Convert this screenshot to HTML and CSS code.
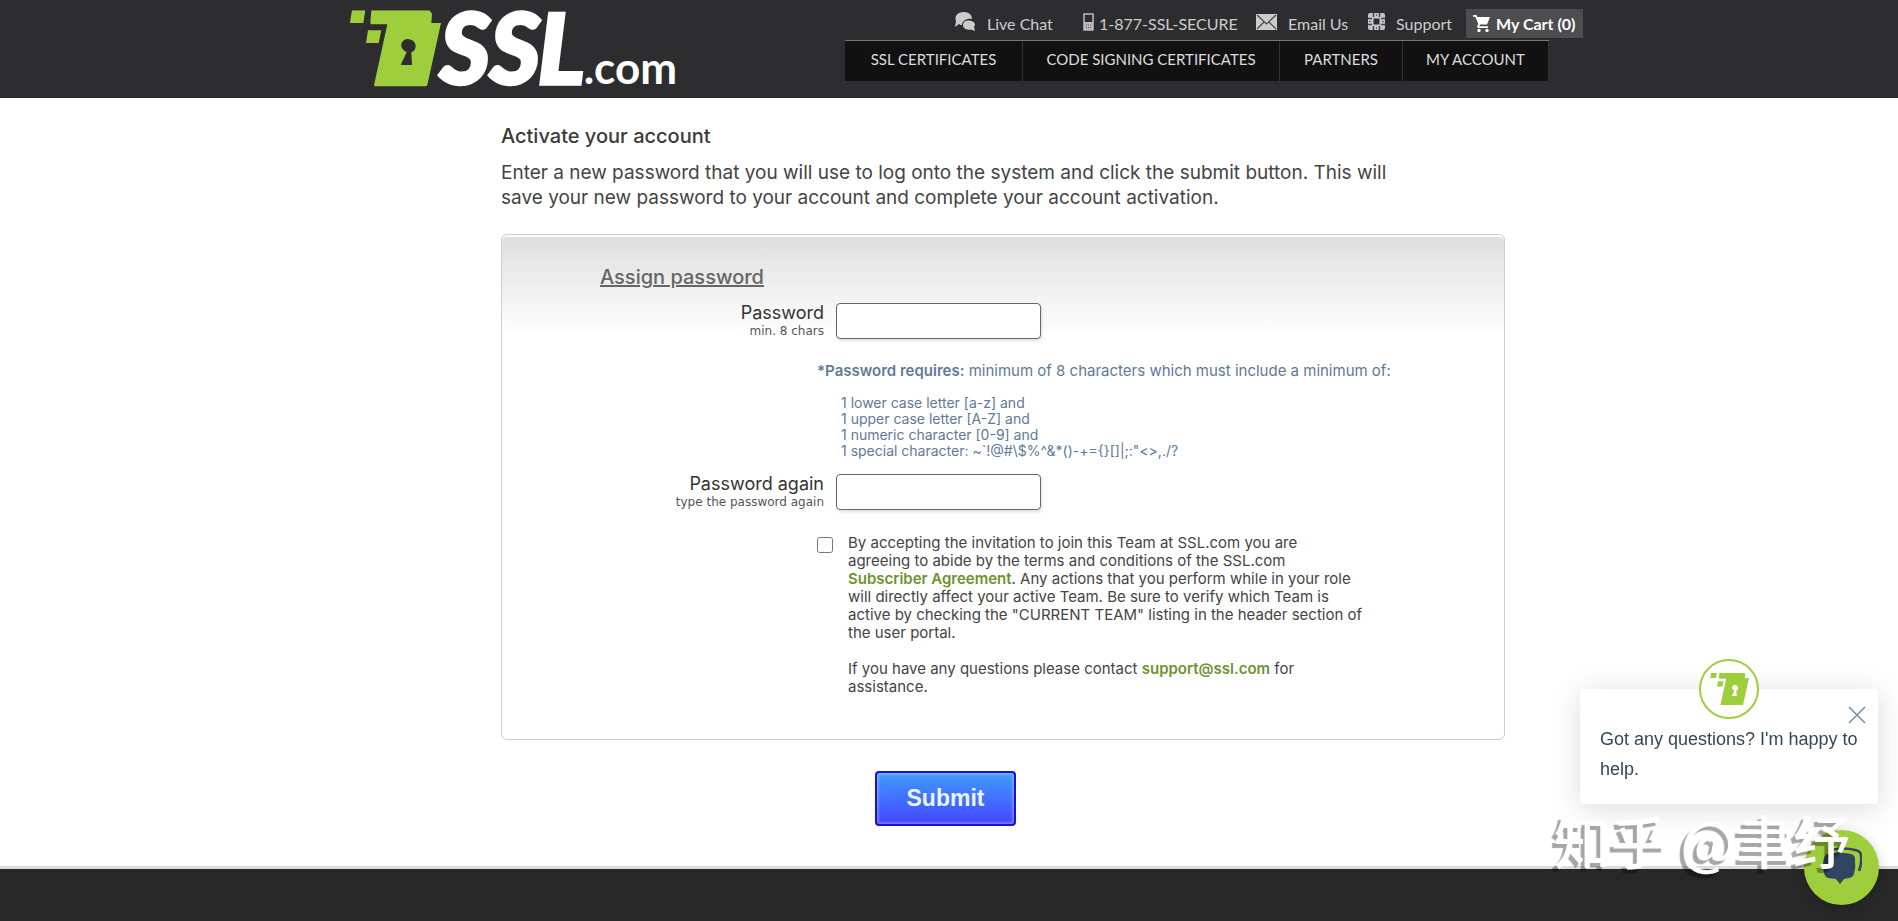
FILE: index.html
```
<!DOCTYPE html>
<html lang="en">
<head>
    <meta charset="utf-8">
    <title>Activate your account</title>
    <link rel="stylesheet" href="styles.css">
</head>
<body>

<svg class="defs" width="0" height="0">
    <symbol id="lock" viewBox="0 0 275 230">
        <path d="M8 0H48L42 38H2Q2 36 3 30ZM56 60H96L88 98H50ZM66 0H240L248 10 246 38H275L234 224Q233 228 228 228H76Q73 226 75 220L114 42H66Q62 40 63 34ZM184 88A19 19 0 0 0 166 122L172 126 154 164H188L186 126A20 20 0 0 0 184 88Z" fill-rule="evenodd"/>
    </symbol>
</svg>

<header class="header">
    <div class="container header-inner">
        <a class="logo" href="#" aria-label="SSL.com">
            <svg width="327" height="80" viewBox="60 24 981 240">
                <use href="#lock" x="61" y="31" width="275" height="230" fill="#9fce3c"/>
                <g class="logo-ssl">
                    <text x="332" y="251">S</text>
                    <text x="482" y="251">S</text>
                    <text x="626" y="251">L</text>
                </g>
                <text class="logo-com" x="764" y="253">.com</text>
            </svg>
        </a>
        <div class="header-right">
            <div class="top-links">
                <a href="#">
                    <svg width="20" height="19" viewBox="0 0 20 19" fill="#ccc"><path d="M9 0C14 0 17 3 17 7 12 6 7 9 7 13 6 13 5 13 4 12L0 15 1 9C-1 4 3 0 9 0Z"/><path d="M13 8.500C17 8.500 20 10 20 13L19 15 20 19 16 17.500C11 18.500 8 16 8 13 8 10 10 8.500 13 8.500Z"/></svg>
                    <span class="gap-l">Live Chat</span>
                </a>
                <a href="#">
                    <svg width="11" height="18" viewBox="0 0 11 18"><path d="M1 1H10V17H1Z" fill="none" stroke="#bbb" stroke-width="1.500"/><path d="M1 9H10V17H1Z" fill="#bbb"/><path d="M3 12H8M3 14.500H8" stroke="#555" stroke-dasharray="1 1"/></svg>
                    <span class="gap-s">1-877-SSL-SECURE</span>
                </a>
                <a href="#">
                    <svg width="21" height="16" viewBox="0 0 21 16"><path d="M0 0H21V16H0Z" fill="#ccc"/><path d="M1 1 10.500 10 20 1M1 15 8 8M20 15 13 8" fill="none" stroke="#444" stroke-width="1.200"/></svg>
                    <span class="gap-m">Email Us</span>
                </a>
                <a href="#">
                    <svg width="17" height="17" viewBox="0 0 17 17"><rect width="17" height="17" rx="2" fill="#c4c4c4"/><path d="M5.500 5.500H11.500V11.500H5.500Z" fill="#2d2d2f"/><path d="M5.500 0V4M11.500 0V4M5.500 13V17M11.500 13V17M0 5.500H4M0 11.500H4M13 5.500H17M13 11.500H17M8 2H9M8 15H9M2 8V9M15 8V9" stroke="#444" stroke-width="1.500"/></svg>
                    <span class="gap-m">Support</span>
                </a>
                <a class="cart" href="#">
                    <svg width="18" height="18" viewBox="0 0 18 18" fill="#fff"><path d="M0 0H3.500L4.300 2H17L14 9.500H7L6.300 11.300H15V13H5L4 11.500 5.300 9 2.300 1.700H0Z"/><circle cx="6" cy="15.500" r="1.700"/><circle cx="14" cy="15.500" r="1.700"/></svg>
                    <span class="gap-s">My Cart (0)</span>
                </a>
            </div>
            <nav class="nav">
                <a href="#">SSL CERTIFICATES</a>
                <a href="#">CODE SIGNING CERTIFICATES</a>
                <a href="#">PARTNERS</a>
                <a href="#">MY ACCOUNT</a>
            </nav>
        </div>
    </div>
</header>

<main class="container content">
    <h1>Activate your account</h1>
    <p class="intro">Enter a new password that you will use to log onto the system and click the submit button. This will save your new password to your account and complete your account activation.</p>

    <form>
        <div class="panel">
            <h2>Assign password</h2>

            <div class="field">
                <label for="password">Password <small>min. 8 chars</small></label>
                <input type="password" id="password">
            </div>

            <div class="requires">
                <p><strong>*Password requires:</strong> minimum of 8 characters which must include a minimum of:</p>
                <ul>
                    <li>1 lower case letter [a-z] and</li>
                    <li>1 upper case letter [A-Z] and</li>
                    <li>1 numeric character [0-9] and</li>
                    <li>1 special character: ~`!@#\$%^&amp;*()-+={}[]|;:"&lt;&gt;,./?</li>
                </ul>
            </div>

            <div class="field">
                <label for="password2">Password again <small>type the password again</small></label>
                <input type="password" id="password2">
            </div>

            <div class="terms">
                <input type="checkbox" id="accept">
                <div>
                    <label for="accept">By accepting the invitation to join this Team at SSL.com you are<br>
                    agreeing to abide by the terms and conditions of the SSL.com<br>
                    <a href="#">Subscriber Agreement</a>. Any actions that you perform while in your role will directly affect your active Team. Be sure to verify which Team is active by checking the "CURRENT TEAM" listing in the header section of the user portal.</label>
                    <p>If you have any questions please contact <a href="#">support@ssl.com</a> for assistance.</p>
                </div>
            </div>
        </div>
        <button class="submit" type="submit">Submit</button>
    </form>
</main>

<footer class="footer"></footer>

<div class="chat-popup">
    <div class="avatar">
        <svg width="39" height="34" viewBox="0 0 275 230" fill="#9fce3c"><use href="#lock"/></svg>
    </div>
    <button class="close" type="button" aria-label="Close">
        <svg width="18" height="18" viewBox="0 0 18 18"><path d="M1 1 17 17M17 1 1 17" stroke="#6f8ba6" stroke-width="1.500"/></svg>
    </button>
    <p>Got any questions? I'm happy to help.</p>
</div>

<button class="chat-button" type="button" aria-label="Open chat">
    <svg width="40" height="38" viewBox="0 0 40 38" fill="#2f4560"><path d="M5 7Q17 4 29 7 33 8 33 12 34 20 32 27 31 30 27 31L22 32 18 37 14 32 6 31Q3 30 2 26 0 18 2 11 3 8 5 7Z"/><path d="M8 3Q22 0 33 3 39 4 39 9 40 16 37 24" fill="none" stroke="#2f4560" stroke-width="2.500"/></svg>
</button>

<div class="watermark">知乎 @聿纾</div>

</body>
</html>
```

FILE: styles.css
```
* {
    box-sizing: border-box;
}
body {
    margin: 0;
    min-height: 100vh;
    display: flex;
    flex-direction: column;
    background-color: #fff;
    color: #444;
    font-family: Inter, sans-serif;
}
h1, h2, p, ul {
    margin: 0;
    padding: 0;
}
.defs {
    position: absolute;
}
.container {
    width: 100%;
    max-width: 1200px;
    margin: 0 auto;
}

/* header */
.header {
    background-color: #2d2d2f;
    height: 98px;
}
.header-inner {
    display: flex;
    justify-content: space-between;
}
.logo {
    margin-top: 8px;
}
.logo svg {
    display: block;
    overflow: visible;
}
.logo text {
    fill: #fff;
    font-family: Lato, sans-serif;
}
.logo-ssl {
    font-size: 292px;
    font-weight: 900;
    font-style: italic;
    stroke: #fff;
    stroke-width: 10px;
}
.logo-com {
    font-size: 132px;
    font-weight: 700;
}
.header-right {
    width: 704px;
}
.top-links {
    display: grid;
    grid-template-columns: 128px 173px 112px 98px 117px;
    justify-content: end;
    margin: 9px -34px 0 0;
}
.top-links a {
    display: flex;
    align-items: center;
    height: 29px;
    color: #ccc;
    font-family: Lato, sans-serif;
    font-size: 16px;
    line-height: 20px;
    text-decoration: none;
    white-space: nowrap;
}
.top-links svg {
    flex: none;
    margin-bottom: 4px;
}
.gap-l {
    margin-left: 12px;
}
.gap-m {
    margin-left: 11px;
}
.gap-s {
    margin-left: 5px;
}
.top-links .cart {
    padding-left: 7px;
    background-color: #4d4d4f;
    color: #fff;
    font-weight: bold;
}
.cart svg {
    margin-bottom: 0;
}
.nav {
    display: grid;
    grid-template-columns: 178px 257px 123px 1fr;
    margin-top: 2px;
    border-top: 1px solid #777;
    background-color: #111;
}
.nav a {
    height: 40px;
    line-height: 37px;
    border-right: 1px solid #333;
    color: #ddd;
    font-family: Lato, sans-serif;
    font-size: 15px;
    text-align: center;
    text-decoration: none;
}

/* page */
.content {
    flex: 1;
    padding: 26px 44px 40px 152px;
}
h1 {
    font-size: 20px;
    line-height: 24px;
    font-weight: 500;
    color: #3a3a3a;
}
.intro {
    max-width: 900px;
    margin: 12px 0 24px;
    font-size: 19px;
    line-height: 25px;
}
.panel {
    height: 506px;
    padding: 30px 98px 0;
    border: 1px solid #ccccd4;
    border-radius: 6px;
    background: linear-gradient(#dedede, #fff 100px);
    box-shadow: inset 0 2px 0 #fff;
}
h2 {
    font-size: 20px;
    line-height: 24px;
    font-weight: 500;
    color: #666;
    text-decoration: underline;
}
.field {
    display: flex;
    align-items: flex-start;
    gap: 12px;
    height: 36px;
}
h2 + .field {
    margin-top: 14px;
}
.field label {
    width: 224px;
    text-align: right;
    font-size: 18px;
    line-height: 19px;
    color: #333;
}
.field small {
    display: block;
    font-family: "DejaVu Sans", sans-serif;
    font-size: 12px;
    color: #555;
}
.field input {
    width: 205px;
    height: 36px;
    border: 1px solid #666;
    border-radius: 4px;
    background-color: #fff;
    box-shadow: 1px 2px 3px rgba(0,0,0,0.12);
}
.requires {
    margin: 24px 0 15px 217px;
    font-size: 14px;
    line-height: 16px;
    color: #60799a;
    white-space: nowrap;
}
.requires p {
    font-size: 15px;
}
.requires strong {
    font-weight: 600;
}
.requires ul {
    margin: 16px 0 0 24px;
    list-style: none;
}
.terms {
    display: flex;
    align-items: flex-start;
    margin: 24px 0 0 217px;
    font-size: 15px;
    line-height: 18px;
}
.terms input {
    flex: none;
    width: 16px;
    height: 16px;
    margin: 3px 15px 0 0;
}
.terms div {
    width: 522px;
}
.terms p {
    margin-top: 18px;
}
.terms a {
    color: #6b9430;
    font-weight: 600;
    text-decoration: none;
}
.submit {
    display: block;
    width: 141px;
    height: 55px;
    margin: 31px 0 0 374px;
    border: 2px solid #1a12d0;
    border-radius: 4px;
    background: linear-gradient(#3f9bff, #4545ff);
    box-shadow: inset 0 0 2px 2px rgba(255,255,255,0.25);
    color: #e8f4ff;
    font: bold 23px "Liberation Sans", sans-serif;
}
.footer {
    height: 55px;
    border-top: 3px solid #ddd;
    background-color: #282828;
}

/* chat widget */
.chat-popup {
    position: fixed;
    right: 20px;
    bottom: 117px;
    width: 298px;
    padding: 35px 20px 20px;
    border-radius: 4px;
    background-color: #fff;
    box-shadow: 0 4px 30px rgba(0,0,0,0.15);
    color: #33475b;
    font: 18px/30px "Liberation Sans", sans-serif;
}
.avatar {
    position: absolute;
    top: -30px;
    left: 119px;
    display: flex;
    align-items: center;
    justify-content: center;
    width: 60px;
    height: 60px;
    border: 2px solid #9fce3c;
    border-radius: 50%;
    background-color: #fff;
}
.close {
    position: absolute;
    top: 17px;
    right: 12px;
    padding: 0;
    border: 0;
    background: none;
    line-height: 0;
}
.chat-button {
    position: fixed;
    right: 19px;
    bottom: 16px;
    width: 75px;
    height: 75px;
    padding: 0;
    border: 0;
    border-radius: 50%;
    background-color: #9fce3c;
    box-shadow: 0 2px 12px rgba(0,0,0,0.2);
}
.watermark {
    position: fixed;
    right: 48px;
    bottom: 52px;
    color: #fff;
    font: 500 57px/60px "Noto Sans CJK SC", sans-serif;
    text-shadow: -4px 4px 1px rgba(0,0,0,0.35);
    white-space: nowrap;
    pointer-events: none;
}
```
